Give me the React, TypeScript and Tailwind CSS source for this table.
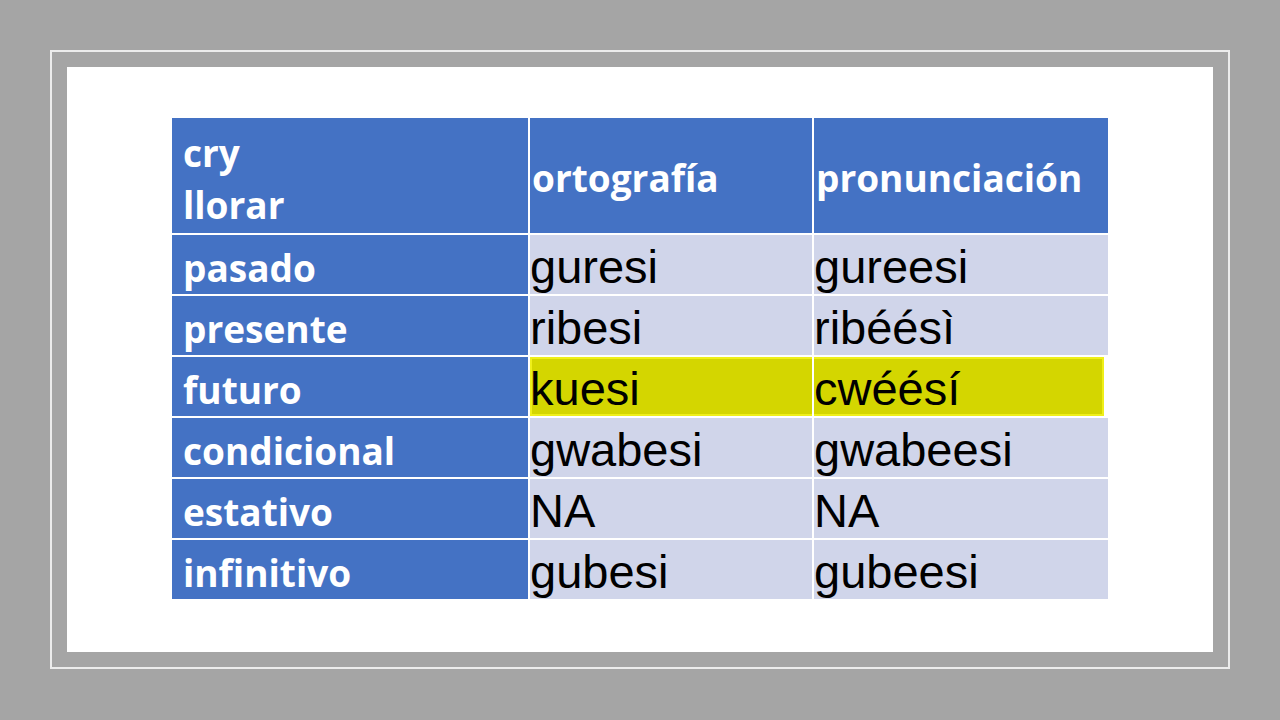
import { Fragment } from 'react';

const rows = [
  { label: 'pasado', ort: 'guresi', pron: 'gureesi' },
  { label: 'presente', ort: 'ribesi', pron: 'ribéésì' },
  { label: 'futuro', ort: 'kuesi', pron: 'cwéésí', hl: true },
  { label: 'condicional', ort: 'gwabesi', pron: 'gwabeesi' },
  { label: 'estativo', ort: 'NA', pron: 'NA' },
  { label: 'infinitivo', ort: 'gubesi', pron: 'gubeesi' },
];

const bold = "font-['Open_Sans',_'Noto_Sans',_sans-serif] font-bold text-white text-[37px]";
const plain = "font-['Liberation_Sans',_Arial,_sans-serif] text-black text-[47px]";

export default function App() {
  return (
    <div className="w-[1280px] h-[720px] bg-[#a5a5a5] pt-[50px] pl-[50px]">
      <div className="w-[1180px] h-[619px] border-2 border-[#ececec] p-[15px]">
        <div className="w-[1146px] h-[585px] bg-white pt-[51px] pl-[105px]">
          <div className="grid grid-cols-[356px_282px_294px] grid-rows-[115px_repeat(6,59px)] gap-[2px] w-[936px]">
            {/* header */}
            <div className={`bg-[#4472c4] pl-[11px] pt-[9px] leading-[52px] ${bold}`}>
              <div>cry</div>
              <div>llorar</div>
            </div>
            <div className={`bg-[#4472c4] pl-[2px] flex items-center pt-[4px] ${bold}`}>ortografía</div>
            <div className={`bg-[#4472c4] pl-[2px] flex items-center pt-[4px] ${bold}`}>pronunciación</div>

            {rows.map((r) => (
              <Fragment key={r.label}>
                <div className={`bg-[#4472c4] pl-[11px] flex items-center pt-[6px] ${bold}`}>{r.label}</div>
                <div
                  className={`${r.hl ? 'bg-[#d4d600] shadow-[inset_2px_2px_0_#efef1a,inset_0_-2px_0_#efef1a]' : 'bg-[#d0d5ea]'} flex items-center pt-[4px] leading-none ${plain}`}
                >
                  {r.ort}
                </div>
                <div
                  className={`${r.hl ? 'bg-[#d4d600] shadow-[inset_-2px_2px_0_#efef1a,inset_0_-2px_0_#efef1a] mr-[4px]' : 'bg-[#d0d5ea]'} flex items-center pt-[4px] leading-none ${plain}`}
                >
                  {r.pron}
                </div>
              </Fragment>
            ))}
          </div>
        </div>
      </div>
    </div>
  );
}
